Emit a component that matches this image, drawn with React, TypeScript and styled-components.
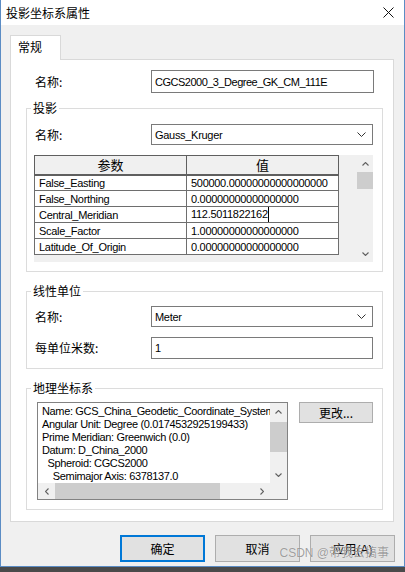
import React from "react";
import styled, { createGlobalStyle } from "styled-components";

const GlobalStyle = createGlobalStyle`
  html, body {
    margin: 0;
    padding: 0;
    background: #4a4a4a;
  }
  body {
    width: 405px;
    height: 572px;
    overflow: hidden;
    font-family: "Liberation Sans", "Noto Sans CJK SC", sans-serif;
    color: #000;
  }
  * { box-sizing: border-box; }
`;

const Screen = styled.div`
  width: 405px;
  height: 572px;
  display: flex;
  flex-direction: column;
  background: #4a4a4a;
`;

const Dialog = styled.div`
  width: 405px;
  height: 567px;
  display: flex;
  flex-direction: column;
  background: #f0f0f0;
  border-left: 1px solid #5b8cc4;
  border-right: 1px solid #5b8cc4;
  border-bottom: 1px solid #5b8cc4;
`;

const TitleBar = styled.div`
  height: 25px;
  flex: none;
  background: #fff;
  display: flex;
  align-items: center;
  justify-content: space-between;
  padding: 0 10px 0 5px;
`;

const Title = styled.span`
  font-size: 12px;
  line-height: 14px;
  font-family: "Noto Sans CJK SC", sans-serif;
`;

const Body = styled.div`
  flex: 1;
  display: flex;
  flex-direction: column;
  padding: 10px 9px 0 9px;
`;

const TabStrip = styled.div`
  display: flex;
`;

const Tab = styled.div`
  position: relative;
  z-index: 1;
  width: 51px;
  height: 25px;
  margin-bottom: -1px;
  background: #fff;
  border: 1px solid #d9d9d9;
  border-bottom: none;
  font-size: 12px;
  font-family: "Noto Sans CJK SC", sans-serif;
  padding: 4px 0 0 7px;
  line-height: 14px;
`;

const Panel = styled.div`
  width: 384px;
  height: 463px;
  background: #fff;
  border: 1px solid #d9d9d9;
  display: flex;
  flex-direction: column;
  padding: 10px 10px 0 15px;
`;

const FieldRow = styled.div<{ $inset?: boolean; $top?: number }>`
  display: grid;
  grid-template-columns: 116px 1fr;
  align-items: center;
  padding: 0 ${(p) => (p.$inset ? "9px" : "0")};
  margin-top: ${(p) => p.$top ?? 0}px;
`;

const Label = styled.span`
  font-size: 12px;
  font-family: "Noto Sans CJK SC", sans-serif;
  line-height: 14px;
`;

const TextInput = styled.div<{ $h: number; $tight?: boolean }>`
  height: ${(p) => p.$h}px;
  border: 1px solid #7a7a7a;
  background: #fff;
  display: flex;
  align-items: center;
  padding-left: 3px;
  font-size: 11px;
  letter-spacing: ${(p) => (p.$tight ? "-0.5px" : "-0.3px")};
  white-space: nowrap;
  overflow: hidden;
`;

const SelectBox = styled(TextInput)`
  justify-content: space-between;
  padding-right: 6px;
`;

const Group = styled.fieldset<{ $top: number }>`
  margin: ${(p) => p.$top}px 0 0 0;
  padding: 0 9px 9px 8px;
  border: 1px solid #dcdcdc;
  min-width: 0;
  display: flex;
  flex-direction: column;
`;

const Legend = styled.legend`
  font-size: 12px;
  line-height: 14px;
  font-family: "Noto Sans CJK SC", sans-serif;
  padding: 0 2px;
  margin-left: -4px;
`;

const GridArea = styled.div`
  margin-top: 10px;
  margin-left: -1px;
  height: 107px;
  background: #f0f0f0;
  display: flex;
  justify-content: space-between;
`;

const ParamTable = styled.table`
  border-collapse: collapse;
  width: 305px;
  table-layout: fixed;
  align-self: flex-start;
  font-size: 11px;
  letter-spacing: -0.3px;
`;

const HeadCell = styled.th`
  height: 19px;
  padding: 0;
  background: #f0f0f0;
  border: 1px solid #5f5f5f;
  border-bottom-width: 2px;
  font-weight: normal;
  font-size: 13px;
  letter-spacing: 0;
  font-family: "Noto Sans CJK SC", sans-serif;
  line-height: 14px;
  text-align: center;
`;

const Cell = styled.td`
  height: 16px;
  padding: 0 0 0 4px;
  background: #fff;
  border: 1px solid #6e6e6e;
  white-space: nowrap;
  overflow: hidden;
  line-height: 14px;
`;

const Caret = styled.span`
  display: inline-block;
  width: 1px;
  height: 15px;
  background: #000;
  vertical-align: -4px;
`;

const VScroll = styled.div<{ $w: number; $bg?: string }>`
  width: ${(p) => p.$w}px;
  display: flex;
  flex-direction: column;
  align-items: stretch;
  background: ${(p) => p.$bg ?? "transparent"};
`;

const ArrowBox = styled.div<{ $size: number; $horizontal?: boolean }>`
  ${(p) => (p.$horizontal ? `width:${p.$size}px;` : `height:${p.$size}px;`)}
  flex: none;
  display: flex;
  align-items: center;
  justify-content: center;
`;

const Track = styled.div<{ $vertical?: boolean }>`
  flex: 1;
  display: flex;
  flex-direction: ${(p) => (p.$vertical ? "column" : "row")};
`;

const Thumb = styled.div<{ $offset: number; $len: number; $vertical?: boolean }>`
  background: #cdcdcd;
  ${(p) =>
    p.$vertical
      ? `margin-top:${p.$offset}px; height:${p.$len}px; width:100%;`
      : `margin-left:${p.$offset}px; width:${p.$len}px; height:100%;`}
`;

const GeoRow = styled.div`
  margin-top: 7px;
  display: flex;
  justify-content: space-between;
  align-items: flex-start;
  padding-left: 2px;
`;

const GeoBox = styled.div`
  width: 251px;
  height: 98px;
  border: 1px solid #828282;
  background: #fff;
  display: grid;
  grid-template-columns: 1fr 17px;
  grid-template-rows: 1fr 16px;
`;

const GeoText = styled.div`
  overflow: hidden;
  white-space: pre;
  padding: 2px 0 0 4px;
  font-size: 11px;
  line-height: 13px;
  letter-spacing: -0.35px;
`;

const HScroll = styled.div`
  display: flex;
  background: #f0f0f0;
  height: 16px;
`;

const Corner = styled.div`
  background: #f0f0f0;
`;

const SmallButton = styled.div`
  width: 74px;
  height: 21px;
  background: #e1e1e1;
  border: 1px solid #adadad;
  display: flex;
  align-items: center;
  justify-content: center;
  font-size: 12px;
  font-family: "Noto Sans CJK SC", sans-serif;
`;

const Footer = styled.div`
  position: relative;
  margin-top: 13px;
  display: flex;
  justify-content: flex-end;
  gap: 10px;
`;

const DlgButton = styled.div<{ $primary?: boolean }>`
  width: 85px;
  height: 27px;
  background: #e1e1e1;
  border: ${(p) => (p.$primary ? "2px solid #0078d7" : "1px solid #adadad")};
  display: flex;
  align-items: center;
  justify-content: center;
  font-size: 12px;
  font-family: "Liberation Sans", "Noto Sans CJK SC", sans-serif;
`;

const Watermark = styled.span`
  position: absolute;
  right: 6px;
  top: 11px;
  font-size: 12px;
  line-height: 14px;
  font-family: "Liberation Sans", "Noto Sans CJK SC", sans-serif;
  color: rgba(120, 120, 120, 0.7);
  text-shadow: 0 0 1px rgba(255, 255, 255, 0.8);
  pointer-events: none;
`;

const Chevron = ({ dir, size = 7 }: { dir: "up" | "down" | "left" | "right"; size?: number }) => {
  const pts: Record<string, string> = {
    down: "0.5,0.5 3.5,3.5 6.5,0.5",
    up: "0.5,3.5 3.5,0.5 6.5,3.5",
    left: "3.5,0.5 0.5,3.5 3.5,6.5",
    right: "0.5,0.5 3.5,3.5 0.5,6.5",
  };
  const horiz = dir === "left" || dir === "right";
  const w = horiz ? 4 : size;
  const h = horiz ? size : 4;
  return (
    <svg width={w} height={h} viewBox={`0 0 ${w} ${h}`}>
      <polyline points={pts[dir]} fill="none" stroke="#606060" strokeWidth="1.1" />
    </svg>
  );
};

const SelectChevron = () => (
  <svg width="9" height="5" viewBox="0 0 9 5">
    <polyline points="0.5,0.5 4.5,4.5 8.5,0.5" fill="none" stroke="#333" strokeWidth="1" />
  </svg>
);

const CloseIcon = () => (
  <svg width="11" height="11" viewBox="0 0 11 11">
    <path d="M0.5 0.5 L10.5 10.5 M10.5 0.5 L0.5 10.5" stroke="#111" strokeWidth="1" />
  </svg>
);

const params: [string, React.ReactNode][] = [
  ["False_Easting", "500000.00000000000000000"],
  ["False_Northing", "0.00000000000000000"],
  [
    "Central_Meridian",
    <>
      112.5011822162
      <Caret />
    </>,
  ],
  ["Scale_Factor", "1.00000000000000000"],
  ["Latitude_Of_Origin", "0.00000000000000000"],
];

const geoText = [
  "Name: GCS_China_Geodetic_Coordinate_System_2000",
  "Angular Unit: Degree (0.0174532925199433)",
  "Prime Meridian: Greenwich (0.0)",
  "Datum: D_China_2000",
  "  Spheroid: CGCS2000",
  "    Semimajor Axis: 6378137.0",
  "    Semiminor Axis: 6356752.314140356",
  "    Inverse Flattening: 298.257222101",
].join("\n");

export default function App() {
  return (
    <>
      <GlobalStyle />
      <Screen>
        <Dialog>
          <TitleBar>
            <Title>投影坐标系属性</Title>
            <CloseIcon />
          </TitleBar>
          <Body>
            <TabStrip>
              <Tab>常规</Tab>
            </TabStrip>
            <Panel>
              <FieldRow $inset>
                <Label>名称:</Label>
                <TextInput $h={23} $tight>
                  CGCS2000_3_Degree_GK_CM_111E
                </TextInput>
              </FieldRow>

              <Group $top={8}>
                <Legend>投影</Legend>
                <FieldRow $top={9}>
                  <Label>名称:</Label>
                  <SelectBox $h={21}>
                    <span>Gauss_Kruger</span>
                    <SelectChevron />
                  </SelectBox>
                </FieldRow>
                <GridArea>
                  <ParamTable>
                    <thead>
                      <tr>
                        <HeadCell>参数</HeadCell>
                        <HeadCell>值</HeadCell>
                      </tr>
                    </thead>
                    <tbody>
                      {params.map(([k, v]) => (
                        <tr key={k}>
                          <Cell>{k}</Cell>
                          <Cell>{v}</Cell>
                        </tr>
                      ))}
                    </tbody>
                  </ParamTable>
                  <VScroll $w={16}>
                    <ArrowBox $size={17}>
                      <Chevron dir="up" />
                    </ArrowBox>
                    <Track $vertical>
                      <Thumb $vertical $offset={0} $len={17} />
                    </Track>
                    <ArrowBox $size={17}>
                      <Chevron dir="down" />
                    </ArrowBox>
                  </VScroll>
                </GridArea>
              </Group>

              <Group $top={12}>
                <Legend>线性单位</Legend>
                <FieldRow $top={8}>
                  <Label>名称:</Label>
                  <SelectBox $h={21}>
                    <span>Meter</span>
                    <SelectChevron />
                  </SelectBox>
                </FieldRow>
                <FieldRow $top={10}>
                  <Label>每单位米数:</Label>
                  <TextInput $h={22}>1</TextInput>
                </FieldRow>
              </Group>

              <Group $top={12}>
                <Legend>地理坐标系</Legend>
                <GeoRow>
                  <GeoBox>
                    <GeoText>{geoText}</GeoText>
                    <VScroll $w={17} $bg="#f0f0f0">
                      <ArrowBox $size={17}>
                        <Chevron dir="up" />
                      </ArrowBox>
                      <Track $vertical>
                        <Thumb $vertical $offset={2} $len={30} />
                      </Track>
                      <ArrowBox $size={17}>
                        <Chevron dir="down" />
                      </ArrowBox>
                    </VScroll>
                    <HScroll>
                      <ArrowBox $size={17} $horizontal>
                        <Chevron dir="left" />
                      </ArrowBox>
                      <Track>
                        <Thumb $offset={0} $len={165} />
                      </Track>
                      <ArrowBox $size={17} $horizontal>
                        <Chevron dir="right" />
                      </ArrowBox>
                    </HScroll>
                    <Corner />
                  </GeoBox>
                  <SmallButton>更改...</SmallButton>
                </GeoRow>
              </Group>
            </Panel>
            <Footer>
              <DlgButton $primary>确定</DlgButton>
              <DlgButton>取消</DlgButton>
              <DlgButton>应用(A)</DlgButton>
              <Watermark>CSDN @带我去搞事</Watermark>
            </Footer>
          </Body>
        </Dialog>
      </Screen>
    </>
  );
}
